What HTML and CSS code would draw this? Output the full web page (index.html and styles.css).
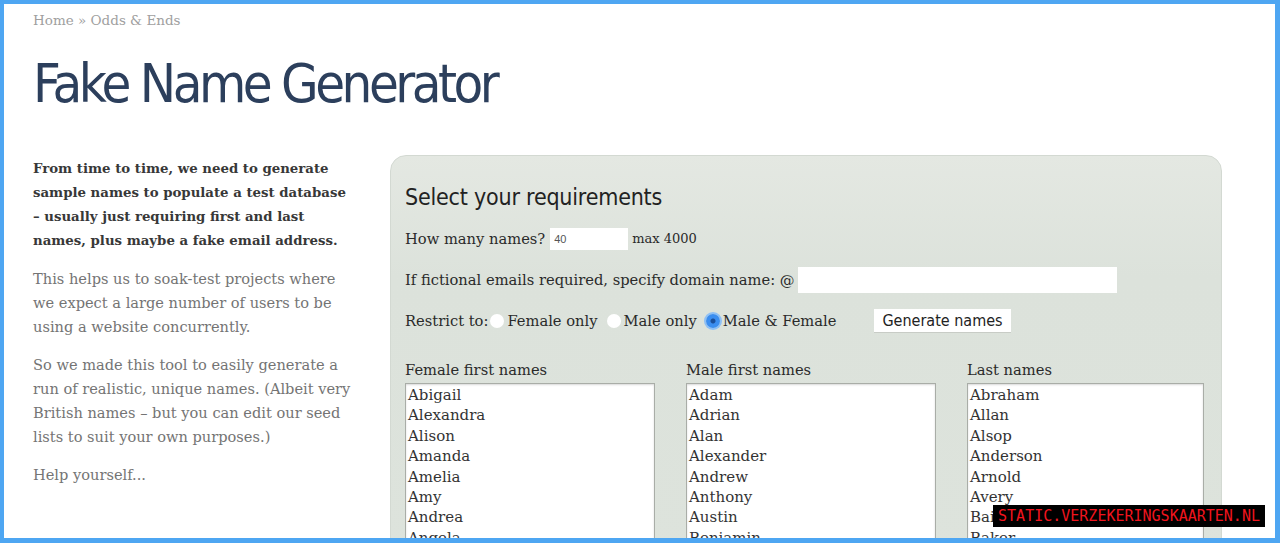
FILE: index.html
```html
<!DOCTYPE html>
<html>

<head>
    <title>Fake Name Generator</title>
    <meta charset="utf-8">
    <link rel="stylesheet" href="styles.css">
</head>

<body>
    <div class='frame'>
        <div class='breadcrumb'>Home &raquo; Odds &amp; Ends</div>
        <h1 class='title'>Fake Name Generator</h1>

        <div class='content'>
            <div class='intro'>
                <p class='lead'>From time to time, we need to generate sample names to populate a test database &ndash; usually just requiring first and last names, plus maybe a fake email address.</p>
                <p>This helps us to soak-test projects where we expect a large number of users to be using a website concurrently.</p>
                <p>So we made this tool to easily generate a run of realistic, unique names. (Albeit very British names &ndash; but you can edit our seed lists to suit your own purposes.)</p>
                <p>Help yourself...</p>
            </div>

            <div class='panel'>
                <h2 class='panel-title'>Select your requirements</h2>
                <div class='row'>
                    <label>How many names?</label>
                    <input type='text' class='count' value='40'>
                    <span class='hint'>max 4000</span>
                </div>
                <div class='row'>
                    <label>If fictional emails required, specify domain name: @</label>
                    <input type='text' class='domain'>
                </div>
                <div class='row'>
                    <label>Restrict to:</label>
                    <label class='choice'><input type='radio' name='gender'>Female only</label>
                    <label class='choice'><input type='radio' name='gender'>Male only</label>
                    <label class='choice'><input type='radio' name='gender' checked>Male &amp; Female</label>
                    <button class='generate'>Generate names</button>
                </div>

                <div class='lists'>
                    <div class='list'>
                        <label>Female first names</label>
                        <textarea>Abigail
Alexandra
Alison
Amanda
Amelia
Amy
Andrea
Angela
Anna
Anne</textarea>
                    </div>
                    <div class='list'>
                        <label>Male first names</label>
                        <textarea>Adam
Adrian
Alan
Alexander
Andrew
Anthony
Austin
Benjamin
Blake
Boris</textarea>
                    </div>
                    <div class='list'>
                        <label>Last names</label>
                        <textarea>Abraham
Allan
Alsop
Anderson
Arnold
Avery
Bailey
Baker
Ball
Bell</textarea>
                    </div>
                </div>
            </div>
        </div>
    </div>
    <div class='watermark'>STATIC.VERZEKERINGSKAARTEN.NL</div>
</body>

</html>
```

FILE: styles.css
```css
* {
    box-sizing: border-box;
}

body {
    margin: 0;
    background: #4ea6f2;
}

.frame {
    height: 100vh;
    overflow: hidden;
    background: #fff;
    border: solid #4ea6f2;
    border-width: 4px 5px 5px 4px;
    padding: 8px 0 0 29px;
    font-family: "DejaVu Serif", serif;
}

.breadcrumb {
    font-size: 13.5px;
    color: #a0a0a0;
    line-height: 16px;
}

.title {
    margin: 23px 0 0 0;
    font-family: "DejaVu Sans", sans-serif;
    font-stretch: condensed;
    font-weight: normal;
    font-size: 54px;
    letter-spacing: -3.5px;
    line-height: 66px;
    color: #2c3f5c;
}

.content {
    display: flex;
    gap: 35px;
    margin-top: 40px;
}

.intro {
    width: 322px;
    flex: none;
    font-size: 14.6px;
    line-height: 24px;
    color: #747474;
}

.intro p {
    margin: 0 0 14px 0;
}

.intro p.lead {
    font-weight: bold;
    font-size: 13.3px;
    color: #383838;
}

.panel {
    width: 832px;
    flex: none;
    height: 420px;
    margin-top: -2px;
    padding: 25px 15px 0 14px;
    border: 1px solid #d3d9d2;
    border-radius: 16px 16px 0 0;
    background: linear-gradient(to bottom, #e4e8e2, #dce2db 120px, #dde3dc);
    color: #2a2a2a;
    font-size: 14.7px;
}

.panel-title {
    margin: 0 0 5px 0;
    font-family: "DejaVu Sans", sans-serif;
    font-stretch: condensed;
    font-weight: normal;
    font-size: 23px;
    letter-spacing: -0.2px;
    line-height: 32px;
    color: #222;
}

.row {
    display: flex;
    align-items: center;
    height: 41px;
}

.row input[type='text'] {
    border: none;
    background: #fff;
    outline: none;
    font-family: "Liberation Sans", sans-serif;
}

.count {
    width: 78px;
    height: 22px;
    margin-left: 5px;
    padding: 0 4px;
    font-size: 11px;
    color: #555;
}

.hint {
    margin-left: 4px;
    font-size: 13px;
}

.domain {
    width: 319px;
    height: 26px;
    margin-left: 3px;
}

.choice {
    display: flex;
    align-items: center;
}

.choice input {
    appearance: none;
    width: 14px;
    height: 14px;
    margin: 0 3px 0 2px;
    border-radius: 50%;
    background: #fff;
}

.choice + .choice input {
    margin-left: 9px;
}

.choice input:checked {
    background: radial-gradient(circle, #1b4f9a 0 2px, #3b8ef0 3px);
    box-shadow: 0 0 0 2px #8ec0f5;
}

.generate {
    margin-left: 38px;
    height: 24px;
    padding: 0 8px;
    border: none;
    border-bottom: 1px solid #c8ccc6;
    background: #fff;
    font-family: "DejaVu Sans", sans-serif;
    font-stretch: condensed;
    font-size: 16px;
    color: #222;
}

.lists {
    display: grid;
    grid-template-columns: 250px 250px 237px;
    column-gap: 31px;
    margin-top: 19px;
}

.list label {
    display: block;
    line-height: 20px;
    margin-bottom: 3px;
}

.list textarea {
    display: block;
    width: 100%;
    height: 200px;
    resize: none;
    padding: 1px 2px;
    border: 1px solid #a9ada7;
    box-shadow: inset 0 1px 2px rgba(0, 0, 0, 0.15);
    font-family: "DejaVu Serif", serif;
    font-size: 15px;
    line-height: 20.4px;
    color: #333;
    overflow: hidden;
}

.watermark {
    position: absolute;
    left: 993px;
    top: 505px;
    width: 272px;
    height: 22px;
    background: #000;
    color: #f0141e;
    font-family: "DejaVu Sans Mono", monospace;
    font-size: 15px;
    line-height: 22px;
    text-align: center;
}
```
